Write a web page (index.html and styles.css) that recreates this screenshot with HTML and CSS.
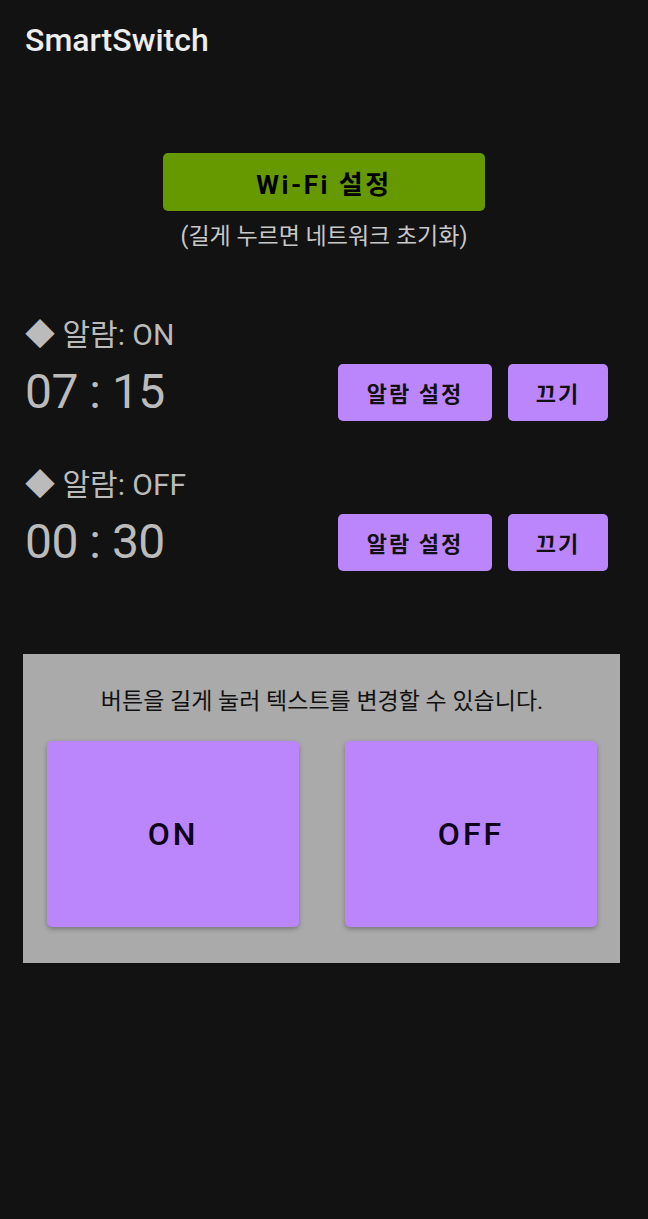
FILE: index.html
```html
<!DOCTYPE html>
<html lang="ko">
<head>
  <meta charset="UTF-8" />
  <meta name="viewport" content="width=device-width, initial-scale=1.0"/>
  <title>SmartSwitch</title>
  <link rel="stylesheet" href="styles.css">
</head>
<body>

<header class="app-bar">SmartSwitch</header>

<section class="wifi">
  <button class="wifi-btn">Wi-Fi 설정</button>
  <p class="wifi-hint">(길게 누르면 네트워크 초기화)</p>
</section>

<section class="alarm">
  <div class="alarm-label">◆ 알람: ON</div>
  <div class="alarm-row">
    <span class="alarm-time">07 : 15</span>
    <div class="alarm-actions">
      <button class="small-btn wide">알람 설정</button>
      <button class="small-btn">끄기</button>
    </div>
  </div>
</section>

<section class="alarm">
  <div class="alarm-label">◆ 알람: OFF</div>
  <div class="alarm-row">
    <span class="alarm-time">00 : 30</span>
    <div class="alarm-actions">
      <button class="small-btn wide">알람 설정</button>
      <button class="small-btn">끄기</button>
    </div>
  </div>
</section>

<section class="switch-panel">
  <p class="switch-hint">버튼을 길게 눌러 텍스트를 변경할 수 있습니다.</p>
  <div class="switch-grid">
    <button class="switch-btn">ON</button>
    <button class="switch-btn">OFF</button>
  </div>
</section>

</body>
</html>
```

FILE: styles.css
```css
* { box-sizing: border-box; }

body {
  margin: 0;
  background-color: #121212;
  color: #bbb;
  font-family: Roboto, "Noto Sans CJK KR", sans-serif;
}

button {
  font-family: Roboto, "Noto Sans CJK KR", sans-serif;
  border: none;
  cursor: pointer;
}

.app-bar {
  height: 80px;
  padding: 22px 25px 0;
  font-size: 32px;
  line-height: 36px;
  font-weight: 500;
  color: #ededed;
}

.wifi {
  margin-top: 73px;
  display: flex;
  flex-direction: column;
  align-items: center;
}

.wifi-btn {
  width: 322px;
  height: 58px;
  background: #669900;
  color: #000;
  font-size: 26px;
  font-weight: bold;
  letter-spacing: 2.5px;
  border-radius: 5px;
}

.wifi-hint {
  margin: 9px 0 0;
  font-size: 23px;
  line-height: 33px;
  color: #c8c8c8;
}

.alarm {
  padding: 0 40px 0 25px;
  margin-top: 62px;
}

.alarm + .alarm {
  margin-top: 41px;
}

.alarm-label {
  font-size: 30px;
  line-height: 40px;
  color: #bbb;
}

.alarm-row {
  display: flex;
  justify-content: space-between;
  align-items: center;
  margin-top: 5px;
  height: 64px;
}

.alarm-time {
  font-size: 48px;
  letter-spacing: -0.5px;
  line-height: 64px;
  color: #bbb;
}

.alarm-actions {
  display: flex;
  gap: 16px;
}

.small-btn {
  width: 100px;
  height: 57px;
  background: #bb86fc;
  color: #111;
  font-size: 22px;
  font-weight: bold;
  letter-spacing: 2px;
  border-radius: 5px;
}

.small-btn.wide {
  width: 154px;
}

.switch-panel {
  margin: 80px 28px 0 23px;
  height: 309px;
  background: #aaa;
  padding: 28px 23px 0 24px;
}

.switch-hint {
  margin: 0;
  text-align: center;
  font-size: 23px;
  line-height: 40px;
  color: #111;
}

.switch-grid {
  display: flex;
  justify-content: space-between;
  margin-top: 19px;
}

.switch-btn {
  width: 252px;
  height: 186px;
  background: #bb86fc;
  color: #0d0018;
  font-size: 32px;
  font-weight: 500;
  letter-spacing: 3px;
  border-radius: 5px;
  box-shadow: 0 2px 5px rgba(0, 0, 0, 0.3);
}
```
